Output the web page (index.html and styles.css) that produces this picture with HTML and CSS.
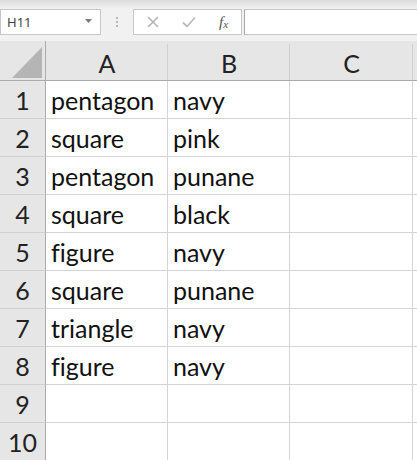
FILE: index.html
```html
<!DOCTYPE html>
<html>
<head>
<meta charset="utf-8">
<link rel="stylesheet" href="styles.css">
</head>
<body>
<div class="app">
  <div class="toolbar">
    <div class="namebox">
      <span class="name">H11</span>
      <svg class="caret" width="7" height="4" viewBox="0 0 7 4"><path d="M0 0H7L3.5 4Z" fill="#7a7a7a"/></svg>
    </div>
    <div class="grip"><i></i><i></i><i></i></div>
    <div class="fnbox">
      <svg class="ico" width="12" height="12" viewBox="0 0 12 12"><path d="M1 1L11 11M11 1L1 11" stroke="#b4b4b4" stroke-width="1.6"/></svg>
      <svg class="ico" width="14" height="12" viewBox="0 0 14 12"><path d="M1 6.5L5 10.5L13 1.5" stroke="#bdbdbd" stroke-width="1.8" fill="none"/></svg>
      <span class="fx">f<sub>x</sub></span>
    </div>
    <div class="formula"></div>
  </div>
  <div class="sheet">
    <div class="corner"><svg width="45" height="39" viewBox="0 0 45 39"><path d="M42 6V37H12Z" fill="#b5b5b5"/></svg></div>
    <div class="colhead">A</div>
    <div class="colhead">B</div>
    <div class="colhead">C</div>
    <div class="colhead last"></div>

    <div class="rowhead">1</div><div class="cell">pentagon</div><div class="cell">navy</div><div class="cell"></div><div class="cell last"></div>
    <div class="rowhead">2</div><div class="cell">square</div><div class="cell">pink</div><div class="cell"></div><div class="cell last"></div>
    <div class="rowhead">3</div><div class="cell">pentagon</div><div class="cell">punane</div><div class="cell"></div><div class="cell last"></div>
    <div class="rowhead">4</div><div class="cell">square</div><div class="cell">black</div><div class="cell"></div><div class="cell last"></div>
    <div class="rowhead">5</div><div class="cell">figure</div><div class="cell">navy</div><div class="cell"></div><div class="cell last"></div>
    <div class="rowhead">6</div><div class="cell">square</div><div class="cell">punane</div><div class="cell"></div><div class="cell last"></div>
    <div class="rowhead">7</div><div class="cell">triangle</div><div class="cell">navy</div><div class="cell"></div><div class="cell last"></div>
    <div class="rowhead">8</div><div class="cell">figure</div><div class="cell">navy</div><div class="cell"></div><div class="cell last"></div>
    <div class="rowhead">9</div><div class="cell"></div><div class="cell"></div><div class="cell"></div><div class="cell last"></div>
    <div class="rowhead">10</div><div class="cell"></div><div class="cell"></div><div class="cell"></div><div class="cell last"></div>
  </div>
</div>
</body>
</html>
```
FILE: styles.css
```css
html, body {
  margin: 0;
  padding: 0;
  background: #ffffff;
}
.app {
  width: 417px;
  height: 460px;
  overflow: hidden;
}
.toolbar {
  height: 41px;
  box-sizing: border-box;
  padding-top: 9px;
  display: flex;
  align-items: flex-start;
  background: linear-gradient(#dcdcdc, #f1f1f1 9px);
}
.namebox {
  width: 101px;
  height: 26px;
  box-sizing: border-box;
  border: 1px solid #c6c6c6;
  background: #fff;
  display: flex;
  align-items: center;
  justify-content: space-between;
  padding: 0 8px 0 6px;
}
.name {
  font-family: "Noto Sans", "Open Sans", sans-serif;
  font-size: 13px;
  color: #444;
}
.caret {
  margin-top: -2px;
}
.grip {
  width: 32px;
  height: 26px;
  display: flex;
  flex-direction: column;
  align-items: center;
  justify-content: center;
  gap: 2px;
}
.grip i {
  display: block;
  width: 2px;
  height: 2px;
  background: #b8b8b8;
}
.fnbox {
  width: 109px;
  height: 26px;
  box-sizing: border-box;
  border: 1px solid #c6c6c6;
  background: #fff;
  display: flex;
  align-items: center;
  padding-left: 12px;
}
.fnbox .ico:first-child {
  margin-left: 1px;
}
.fnbox .ico:nth-child(2) {
  margin-left: 23px;
}
.fx {
  margin-left: 23px;
  font-family: "Liberation Serif", serif;
  font-style: italic;
  font-size: 15px;
  color: #555;
}
.fx sub {
  font-size: 11px;
  vertical-align: -1px;
}
.formula {
  flex: 1;
  height: 26px;
  box-sizing: border-box;
  margin-left: 2px;
  border: 1px solid #c6c6c6;
  border-left: 1px solid #a8a8a8;
  border-right: none;
  background: #fff;
}
.sheet {
  display: grid;
  grid-template-columns: 46px 122px 122px 123px 20px;
  grid-template-rows: 40px repeat(10, 38px);
  font-family: "Lato", "Open Sans", sans-serif;
  font-size: 25px;
  font-variant-ligatures: none;
  color: #111;
}
.corner {
  background: #e6e6e6;
  border-right: 1px solid #ababab;
  border-bottom: 1px solid #ababab;
  overflow: hidden;
}
.corner svg {
  display: block;
}
.colhead {
  background: linear-gradient(#cfcfcf, #cfcfcf) right bottom / 1px 36px no-repeat, #e6e6e6;
  border-bottom: 1px solid #ababab;
  display: flex;
  align-items: center;
  justify-content: center;
  padding-top: 4px;
  box-sizing: border-box;
  color: #222;
}
.rowhead {
  background: #e6e6e6;
  border-right: 1px solid #ababab;
  border-bottom: 1px solid #d0d0d0;
  display: flex;
  align-items: center;
  justify-content: center;
  color: #222;
}
.cell {
  border-right: 1px solid #d4d4d4;
  border-bottom: 1px solid #d4d4d4;
  display: flex;
  align-items: center;
  padding-left: 5px;
  white-space: nowrap;
  overflow: hidden;
}
.cell.last, .colhead.last {
  border-right: none;
}
.colhead.last {
  background: #e6e6e6;
}
```
